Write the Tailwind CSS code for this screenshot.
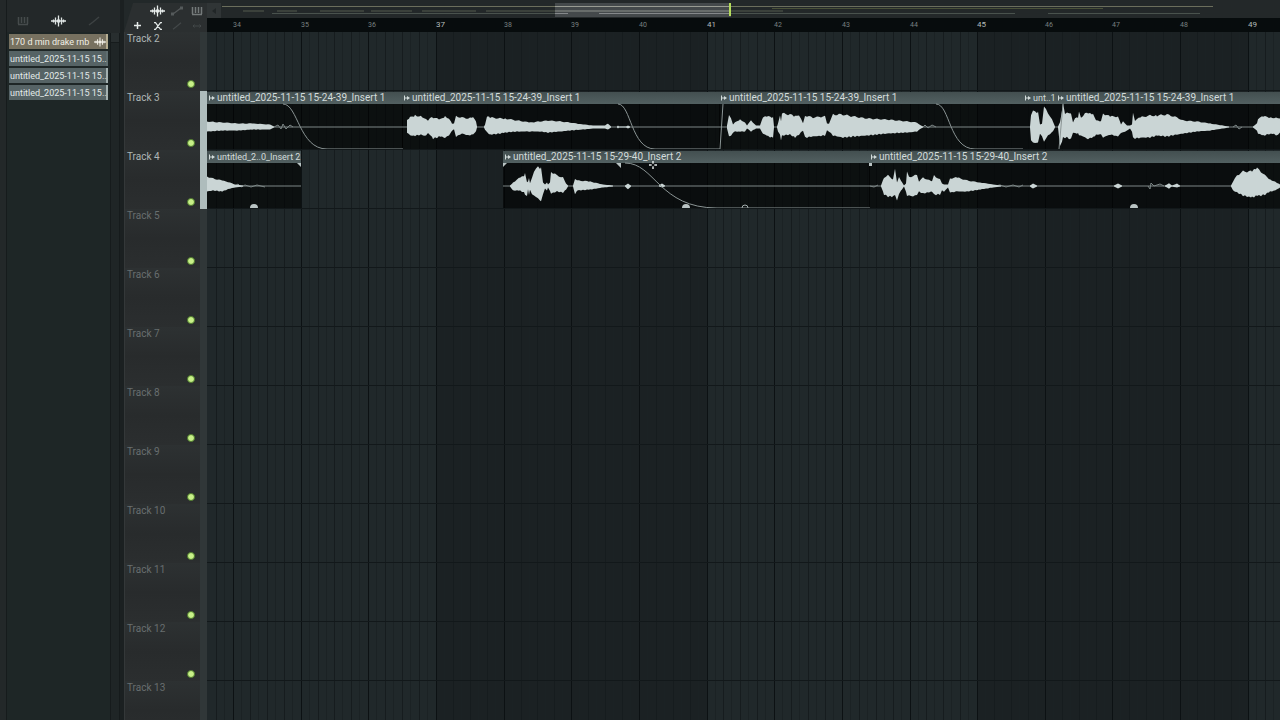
<!DOCTYPE html>
<html lang="en">
<head>
    <meta charset="UTF-8">
    <meta name="viewport" content="width=device-width, initial-scale=1.0">
    <title>Playlist</title>
    <script src="https://cdn.jsdelivr.net/npm/@tailwindcss/browser@4"></script>
</head>
<body class="flex h-screen overflow-hidden bg-[#222829] font-['Roboto',sans-serif] text-[10px] leading-3 text-[#c9d3d2]">

    <!-- Shared icons -->
    <svg class="hidden">
        <symbol id="icon-wave" viewBox="0 0 15 12">
            <path d="M0 6h15" stroke="currentColor" stroke-width="1.5"/>
            <path d="M2.500 4.500v3M4.500 2.500v7M7.500 .5v11M10.500 2.500v7M12.500 4.500v3" stroke="currentColor" stroke-width="1.300"/>
            <path d="M6 4.500h3v3H6z" fill="currentColor"/>
        </symbol>
        <symbol id="icon-auto" viewBox="0 0 12 10">
            <path d="M2 8L10 2" fill="none" stroke="currentColor" stroke-width="1.2"/>
            <path d="M0 6.500h3v3H0zM9 .5h3v3H9z" fill="currentColor"/>
        </symbol>
        <symbol id="icon-line" viewBox="0 0 12 10">
            <path d="M1 9L5 6L11 1" fill="none" stroke="currentColor" stroke-width="1.500"/>
        </symbol>
        <symbol id="icon-keys" viewBox="0 0 12 10">
            <path d="M1.500 1v7M4.500 1v6M7.500 1v6M10.500 1v7M1 8.500h10" fill="none" stroke="currentColor" stroke-width="1.500"/>
        </symbol>
        <symbol id="icon-clip" viewBox="0 0 6 6">
            <path d="M.5 .5v5M1 3h2" fill="none" stroke="currentColor"/>
            <path d="M3 1L6 3L3 5z" fill="currentColor"/>
        </symbol>
    </svg>

    <!-- Picker -->
    <aside class="flex w-[124px] shrink-0 border-r-4 border-[#1b2021] bg-[#232829]">
        <div class="w-[7px] border-r border-[#161b1c]"></div>
        <div class="flex w-[103px] flex-col">
            <div class="flex h-8 items-center justify-between pt-2.5 pr-2.5 pl-2.5">
                <button aria-label="Patterns" class="text-[#464b4c]"><svg class="h-[10px] w-3"><use href="#icon-keys"/></svg></button>
                <button aria-label="Audio clips" class="text-[#dfe5e4]"><svg class="h-3 w-[15px]"><use href="#icon-wave"/></svg></button>
                <button aria-label="Automation clips" class="text-[#3d4243]"><svg class="h-[10px] w-3"><use href="#icon-line"/></svg></button>
            </div>
            <ul class="flex grow flex-col gap-0.5 bg-[#1e2626] pt-0.5 pr-0.5 pl-0.5 text-[9px] whitespace-nowrap text-[#e3eae9]">
                <li><button class="flex h-[15px] w-full items-center justify-between border-r-2 border-[#b5ad92] bg-[#777160] pl-px text-left text-[#f0eee6]"><span>170 d min drake rnb</span><svg class="h-[10px] w-3"><use href="#icon-wave"/></svg></button></li>
                <li><button class="block h-[15px] w-full border-r-2 border-[#5f6e70] bg-[#566365] pl-px text-left">untitled_2025-11-15 15..</button></li>
                <li><button class="block h-[15px] w-full border-r-2 border-[#a3b0b0] bg-[#566365] pl-px text-left">untitled_2025-11-15 15..</button></li>
                <li><button class="block h-[15px] w-full border-r-2 border-[#a3b0b0] bg-[#566365] pl-px text-left">untitled_2025-11-15 15..</button></li>
            </ul>
        </div>
        <div class="mt-[33px] grow border-x border-[#161b1c] bg-[#1f2526]">
            <button aria-label="Scroll up" class="block h-[10px] w-full border-b border-[#161b1c] bg-[#282e2f]"></button>
        </div>
    </aside>

    <main class="flex min-w-0 grow flex-col">
        <header class="flex h-8 shrink-0">
            <div class="mt-[3px] grid w-[83px] shrink-0 grid-cols-4 items-center justify-items-center bg-[#2b2f30] pl-1 text-[#555a5b] [clip-path:polygon(9px_0,100%_0,100%_100%,0_100%)]">
                <span></span>
                <button aria-label="Audio" class="text-[#e6ebea]"><svg class="h-3 w-[15px]"><use href="#icon-wave"/></svg></button>
                <button aria-label="Automation"><svg class="h-[10px] w-3"><use href="#icon-auto"/></svg></button>
                <button aria-label="Patterns" class="text-[#747a7a]"><svg class="h-[10px] w-3"><use href="#icon-keys"/></svg></button>
                <button aria-label="Add" class="text-[#e6ebea]"><svg class="size-[7px]" viewBox="0 0 7 7"><path d="M3.500 0v7M0 3.500h7" stroke="currentColor" stroke-width="1.500"/></svg></button>
                <button aria-label="Crossfade" class="text-[#dfe5e4]"><svg class="size-2" viewBox="0 0 8 8"><path d="M0 .7h1.500L6.500 7.300H8M0 7.300h1.500L6.500 .7H8" fill="none" stroke="currentColor" stroke-width="1.300"/></svg></button>
                <button aria-label="Slide" class="text-[#434849]"><svg class="h-2 w-[10px]"><use href="#icon-line"/></svg></button>
                <button aria-label="Stretch" class="text-[#434849]"><svg class="h-2 w-[10px]" viewBox="0 0 10 8"><path d="M1 4h8M2.500 2.500L1 4L2.500 5.500M7.500 2.500L9 4L7.500 5.500" fill="none" stroke="currentColor"/></svg></button>
            </div>
            <div class="flex min-w-0 grow flex-col">
                <div class="flex h-[18px] bg-[#232829] pt-[3px]">
                    <button aria-label="Scroll left" class="flex w-[14px] items-center justify-center bg-[#303536] text-[#212627]"><svg class="size-2" viewBox="0 0 8 8"><path d="M6 1L2 4L6 7z" fill="currentColor"/></svg></button>
                    <svg class="h-[15px] grow">
                        <rect x="334" width="176" height="14" fill="#44494b"/>
                        <path d="M1 3.500H992" stroke="#6b6e5c"/>
                        <path d="M551 5.500H882" stroke="#4b5239"/>
                        <path d="M22 8H43M56 8H76M99 8H143M150 8H191M201 8H255M265 8H334M510 8H562" stroke="#3b413b" stroke-width="2"/>
                        <path d="M51 10.500H334M510 10.500H794M827 10.500H979" stroke="#49524d"/>
                        <path d="M334 3.500H510" stroke="#989b92"/>
                        <path d="M334 8H510" stroke="#686d6b" stroke-width="2"/>
                        <path d="M334 10.500H347M378 10.500H510" stroke="#85898b"/>
                        <rect x="508" width="2" height="13" fill="#b4dc5c"/>
                    </svg>
                </div>
                <div id="ruler" class="relative grow overflow-hidden bg-[#070c0d]"></div>
            </div>
        </header>

        <div class="relative grow overflow-hidden">
            <div class="absolute inset-y-0 right-0 left-[83px] bg-[#20282a]">
                <svg id="grid" class="h-full w-full"></svg>
            </div>
            <div id="tracks" class="relative"></div>
            <!-- Move cursor -->
            <svg class="absolute top-[129px] left-[525px] size-2" viewBox="0 0 8 8">
                <path d="M4 0v3M4 5v3M0 4h3M5 4h3M3 1h2M3 7h2M1 3v2M7 3v2" stroke="#e3e9e8"/>
            </svg>
        </div>
    </main>

    <template id="trackTemplate">
        <section class="flex h-[59px]">
            <div class="flex w-[76px] shrink-0 justify-between border-l border-[#343839] bg-linear-to-b from-[#2d3132] via-[#282b2c] to-[#2b2e2f] pr-[5px] pl-0.5">
                <h2 class="name pt-px text-[10px]"></h2>
                <button aria-label="Mute" class="mb-[3px] size-2 self-end rounded-full border border-[#4d7a2c] bg-[#c8f088]"></button>
            </div>
            <div class="strip w-[7px] shrink-0"></div>
            <div class="lane relative min-w-0 grow overflow-hidden border-b border-[#12181a]"></div>
        </section>
    </template>

    <template id="clipTemplate">
        <article class="absolute top-px bottom-0 bg-black/60">
            <h3 class="flex h-3 items-center gap-0.5 bg-linear-to-b from-[#434f50] to-[#526061] pl-0.5 whitespace-nowrap text-[#d3dcdb]">
                <svg class="size-[6px] shrink-0"><use href="#icon-clip"/></svg>
                <span></span>
            </h3>
        </article>
    </template>

    <script>
        const SVG = 'http://www.w3.org/2000/svg';
        const BAR = 67.65, FIRST_BAR = 34, FIRST_X = 26;
        const LANE_LEFT = 207;

        // clips: [left, width, name]; waves: points of [x, above, below]
        const lanes = {
            3: {
                clips: [
                    [0, 196, 'untitled_2025-11-15 15-24-39_Insert 1'],
                    [195, 318, 'untitled_2025-11-15 15-24-39_Insert 1'],
                    [512, 304, 'untitled_2025-11-15 15-24-39_Insert 1'],
                    [816, 33, 'unt..1'],
                    [849, 600, 'untitled_2025-11-15 15-24-39_Insert 1']
                ],
                waves: [
                    [[0,5,4],[16,4,3],[30,3,3],[45,3,2],[63,2,2],[67,0,0]],
                    [[200,6,5],[203,9,8],[208,11,8],[215,10,7],[217,8,9],[221,6,6],[223,9,7],[226,9,11],[233,7,9],[238,10,10],[242,8,8],[245,3,3],[247,3,2],[249,10,9],[255,9,6],[261,8,8],[266,9,7],[269,5,4],[270,0,0]],
                    [[277,0,0],[278,2,2],[280,10,5],[283,9,7],[293,8,6],[298,8,5],[310,6,4],[323,4,4],[333,5,4],[341,6,5],[353,5,4],[363,4,3],[376,2,2],[386,1,1],[398,1,1],[401,3,2],[404,0,0]],
                    [[410,0,0],[411,1,1],[412,0,0],[419,0,0],[421,1,1],[423,0,0]],
                    [[520,1,1],[522,11,8],[524,9,9],[526,2,5],[528,4,4],[533,7,4],[538,4,4],[540,1,1],[544,6,4],[549,1,1],[553,1,1],[556,9,6],[561,10,9],[566,9,10],[567,0,0]],
                    [[570,0,0],[571,3,4],[573,12,7],[574,5,12],[575,13,8],[583,12,7],[588,10,10],[592,12,7],[596,3,3],[598,11,10],[606,9,9],[618,10,8],[620,3,3],[622,3,4],[626,12,8],[636,12,10],[646,10,9],[660,8,8],[680,7,6],[700,5,5],[710,4,4],[714,1,1],[716,0,0]],
                    [[823,0,0],[824,12,13],[826,15,15],[831,14,16],[833,2,6],[835,3,9],[837,19,14],[841,14,8],[846,5,4],[848,0,0]],
                    [[851,0,0],[853,4,20],[856,22,10],[858,12,10],[860,15,10],[864,12,12],[866,4,5],[868,9,6],[871,9,6],[872,14,8],[874,9,8],[878,13,10],[881,13,11],[886,12,10],[889,6,7],[894,5,7],[896,13,10],[903,10,7],[911,10,9],[914,2,5],[916,5,5],[920,1,3],[923,1,1],[925,2,4],[926,14,10],[928,6,11],[933,9,10],[943,11,10],[950,11,8],[960,12,9],[970,9,7],[976,6,6],[990,5,4],[1003,3,3],[1016,1,1],[1022,0,0]],
                    [[1046,0,0],[1050,3,3],[1051,8,6],[1056,10,8],[1065,9,6],[1071,8,8],[1073,8,5]]
                ],
                zero: 'M0 36H1100M67 36l4-2l3 4l2 -5l3 5l4-4l3 2M716 36l2-2l3 3l4-3l4 2M1026 36l3-2l3 4l3-2',
                fades: 'M76 13C91 13 92 58 120 58H196M411 13C424 13 424 58 448 58H513L516 13M729 13C743 13 742 58 768 58H816M852 58L856 13'
            },
            4: {
                clips: [
                    [0, 94, 'untitled_2..0_Insert 2'],
                    [296, 367, 'untitled_2025-11-15 15-29-40_Insert 2'],
                    [662, 600, 'untitled_2025-11-15 15-29-40_Insert 2']
                ],
                waves: [
                    [[0,9,5],[6,7,4],[15,5,5],[23,3,2],[28,1,1],[36,0,0]],
                    [[303,0,0],[306,3,4],[313,8,4],[317,9,6],[318,12,8],[320,3,10],[321,4,3],[322,8,8],[323,2,3],[325,8,8],[327,15,9],[331,18,12],[334,17,14],[336,3,8],[338,1,2],[340,3,4],[341,1,1],[343,3,5],[344,14,7],[350,10,5],[356,8,6],[359,2,3],[361,0,0]],
                    [[366,0,0],[368,7,8],[370,5,4],[383,4,3],[396,1,1],[406,0,0]],
                    [[418,0,0],[421,2,3],[424,0,0]],
                    [[452,0,0],[455,2,1],[458,0,0]],
                    [[674,0,0],[677,8,8],[681,10,10],[686,6,10],[688,18,8],[690,3,15],[692,8,7],[695,3,3],[697,0,0],[699,2,5],[700,13,9],[702,9,9],[706,9,10],[710,11,8],[712,4,5],[716,8,7],[725,4,5],[727,10,8],[733,6,8],[735,2,4],[737,1,5],[741,1,1],[743,7,6],[750,8,5],[760,5,5],[773,3,3],[786,1,1],[794,0,0]],
                    [[823,0,0],[826,2,2],[830,0,0]],
                    [[907,0,0],[911,2,2],[915,0,0]],
                    [[958,0,0],[962,2,2],[965,0,0],[970,2,1],[973,0,0]],
                    [[1024,0,0],[1026,4,4],[1030,10,6],[1036,14,9],[1045,14,11],[1050,17,9],[1054,14,9],[1058,10,8],[1063,6,5],[1068,4,4],[1073,1,1]]
                ],
                zero: 'M0 36H94M296 36H1100M28 36l3-2l3 3l4-2l6 2l6-2l8 2M663 36l4 1l4-2M788 36l5-1l6 2l7-2l6 2l4-2M941 36l2 3l1-6l3 3l6-2l4 2',
                fades: 'M418 13C448 13 452 58 510 58H663'
            }
        };

        function add(parent, tag, attrs) {
            const el = document.createElementNS(SVG, tag);
            for (const key in attrs) el.setAttribute(key, attrs[key]);
            parent.appendChild(el);
            return el;
        }

        // Outline of one sound, with a slightly rough edge
        function wavePath(points) {
            const top = [], bottom = [];
            for (let i = 0; i < points.length - 1; i++) {
                const [x0, u0, d0] = points[i], [x1, u1, d1] = points[i + 1];
                for (let x = x0; x < x1; x += 2) {
                    const t = (x - x0) / (x1 - x0);
                    const u = u0 + (u1 - u0) * t, d = d0 + (d1 - d0) * t;
                    top.push(x + ' ' + (35.5 - u * (1 + 0.08 * Math.sin(x * 2.3))));
                    bottom.unshift(x + ' ' + (36.5 + d * (1 + 0.08 * Math.sin(x * 1.7))));
                }
            }
            const [x, u, d] = points[points.length - 1];
            top.push(x + ' ' + (35.5 - u));
            bottom.unshift(x + ' ' + (36.5 + d));
            return 'M' + top.join('L') + 'L' + bottom.join('L') + 'z';
        }

        function drawGrid() {
            const grid = document.getElementById('grid');
            const ruler = document.getElementById('ruler');
            const width = window.innerWidth - LANE_LEFT;
            // every second group of four bars is darker
            for (let bar = 37; bar < 80; bar += 8) {
                add(grid, 'rect', { x: Math.round(FIRST_X + (bar - FIRST_BAR) * BAR), y: 0, width: 271, height: '100%', fill: '#1b2123' });
            }
            for (let i = -1; FIRST_X + i * BAR / 4 < width; i++) {
                const x = Math.round(FIRST_X + i * BAR / 4);
                const isBar = i % 4 === 0;
                add(grid, 'rect', { x: x, y: 0, width: 1, height: '100%', fill: isBar ? '#0c1113' : '#161c1e' });
                add(grid, 'rect', { x: x + 8, y: 0, width: 1, height: '100%', fill: '#1b2224' });
                if (!isBar || x > width - 12) continue;
                const bar = FIRST_BAR + i / 4;
                const label = document.createElement('span');
                label.textContent = bar;
                label.className = bar % 4 === 1
                    ? 'absolute top-px text-[8px] text-[#b3bbbb]'
                    : 'absolute top-px text-[7px] text-[#788080]';
                label.style.left = x + 'px';
                ruler.appendChild(label);
            }
        }

        function drawLane(lane, data) {
            const template = document.getElementById('clipTemplate');
            data.clips.forEach(([left, width, name]) => {
                const clip = template.content.cloneNode(true).firstElementChild;
                clip.style.left = left + 'px';
                clip.style.width = width + 'px';
                clip.querySelector('span').textContent = name;
                // short clips take the smaller label
                if (width < 100) clip.querySelector('h3').classList.add('text-[9px]');
                lane.appendChild(clip);
            });
            const svg = add(lane, 'svg', { class: 'absolute inset-0 h-full w-full' });
            add(svg, 'path', { d: data.zero, fill: 'none', stroke: '#7c8686' });
            data.waves.forEach(points => add(svg, 'path', { d: wavePath(points), fill: '#cad5d5' }));
            add(svg, 'path', { d: data.fades, fill: 'none', stroke: '#8a9494' });
            return svg;
        }

        function drawTracks() {
            const tracks = document.getElementById('tracks');
            const template = document.getElementById('trackTemplate');
            for (let n = 2; n <= 13; n++) {
                const track = template.content.cloneNode(true).firstElementChild;
                const data = lanes[n];
                const name = track.querySelector('.name');
                name.textContent = 'Track ' + n;
                name.classList.add(n < 5 ? 'text-[#aeb5b5]' : 'text-[#686e6f]');
                track.querySelector('.strip').classList.add(data ? 'bg-[#aebcbc]' : 'bg-[#303738]');
                if (data) {
                    const svg = drawLane(track.querySelector('.lane'), data);
                    if (n === 4) {
                        // fade and stretch handles
                        add(svg, 'path', { d: 'M43 58a4 4 0 0 1 8 0zM475 58a4 4 0 0 1 8 0zM923 58a4 4 0 0 1 8 0zM90 13h4v4zM296 13h4l-4 4zM409 13h5v5zM662 13h3v3h-3z', fill: '#b9c3c3' });
                        add(svg, 'path', { d: 'M535 58a3 3 0 0 1 6 0', fill: 'none', stroke: '#a5afaf' });
                    }
                }
                tracks.appendChild(track);
            }
        }

        drawGrid();
        drawTracks();
    </script>
</body>
</html>
